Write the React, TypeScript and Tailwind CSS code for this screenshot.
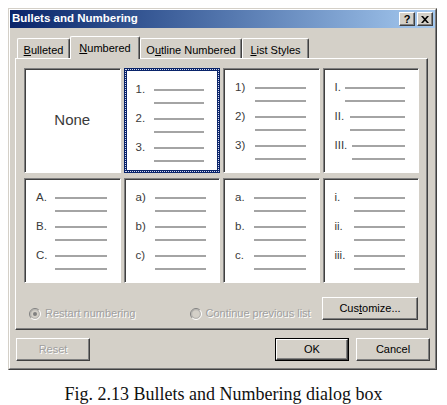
import React from 'react'

type Item = { label: string; numW: string }

const ui = "font-['Liberation_Sans',Arial,sans-serif]"

function Bar() {
  return <div className="h-[2px] flex-1 bg-[#a4a4a4]" />
}

function ListCell({ items, selected }: { items: Item[]; selected?: boolean }) {
  const content = (
    <div className={`flex flex-col gap-[3px] pt-[12px] pr-[13px] ${selected ? 'pl-[9px]' : 'pl-[11px]'}`}>
      {items.map((it) => (
        <div key={it.label}>
          <div className="flex h-[13px] items-center">
            <span className={`${it.numW} shrink-0 text-[11.5px] leading-none text-[#3a3a3a]`}>{it.label}</span>
            <Bar />
          </div>
          <div className="flex h-[13px] items-center">
            <span className={`${it.numW} shrink-0`} />
            <Bar />
          </div>
        </div>
      ))}
    </div>
  )

  if (selected) {
    return (
      <div className="h-[105px] border border-[#0a246a] bg-[#0a246a]">
        <div className="h-full border border-dotted border-[#d8dcf0]">
          <div className="h-full border border-[#0a246a] bg-white">{content}</div>
        </div>
      </div>
    )
  }

  return (
    <div className="h-[105px] border border-t-[#808080] border-l-[#808080] border-r-white border-b-white bg-white shadow-[inset_1px_1px_0_#404040]">
      {content}
    </div>
  )
}

function Radio({ checked }: { checked?: boolean }) {
  return (
    <svg width="12" height="12" viewBox="0 0 12 12" className="shrink-0">
      <defs>
        <linearGradient id="rg" x1="0" y1="0" x2="1" y2="1">
          <stop offset="0.45" stopColor="#808080" />
          <stop offset="0.55" stopColor="#ffffff" />
        </linearGradient>
      </defs>
      <circle cx="6" cy="6" r="5.5" fill="#d4d0c8" stroke="url(#rg)" />
      <circle cx="6" cy="6" r="4.3" fill="#d4d0c8" stroke="#9a9a9a" strokeWidth="0.6" />
      {checked && <circle cx="6" cy="6" r="2" fill="#808080" />}
    </svg>
  )
}

function Button({
  children,
  disabled,
  isDefault,
  width,
}: {
  children: React.ReactNode
  disabled?: boolean
  isDefault?: boolean
  width: string
}) {
  const face = (
    <div
      className={`flex h-full items-center justify-center border border-t-white border-l-white border-r-[#404040] border-b-[#404040] shadow-[inset_-1px_-1px_0_#808080] text-[11px] ${
        disabled ? 'text-[#a0a0a0] [text-shadow:1px_1px_0_#fff]' : 'text-black'
      }`}
    >
      {children}
    </div>
  )
  return (
    <div className={`${width} h-[23px] ${isDefault ? 'border border-black' : ''}`}>{face}</div>
  )
}

function Tab({ children, width, selected }: { children: React.ReactNode; width: string; selected?: boolean }) {
  if (selected) {
    return (
      <div
        className={`${width} relative -mb-px flex h-[23px] items-start justify-center rounded-t-[2px] border-l border-t border-r border-l-white border-t-white border-r-[#404040] bg-[#d4d0c8] pt-[3px] text-[11px] shadow-[inset_-1px_0_0_#808080]`}
      >
        {children}
      </div>
    )
  }
  return (
    <div
      className={`${width} flex h-[20px] items-start justify-center rounded-t-[2px] border-l border-t border-r border-l-white border-t-white border-r-[#404040] pt-[3px] text-[11px] shadow-[inset_-1px_0_0_#808080]`}
    >
      {children}
    </div>
  )
}

const grid: { items?: Item[]; none?: boolean; selected?: boolean }[] = [
  { none: true },
  {
    selected: true,
    items: [
      { label: '1.', numW: 'w-[18px]' },
      { label: '2.', numW: 'w-[18px]' },
      { label: '3.', numW: 'w-[18px]' },
    ],
  },
  {
    items: [
      { label: '1)', numW: 'w-[20px]' },
      { label: '2)', numW: 'w-[20px]' },
      { label: '3)', numW: 'w-[20px]' },
    ],
  },
  {
    items: [
      { label: 'I.', numW: 'w-[10px]' },
      { label: 'II.', numW: 'w-[15px]' },
      { label: 'III.', numW: 'w-[17px]' },
    ],
  },
  {
    items: [
      { label: 'A.', numW: 'w-[19px]' },
      { label: 'B.', numW: 'w-[19px]' },
      { label: 'C.', numW: 'w-[19px]' },
    ],
  },
  {
    items: [
      { label: 'a)', numW: 'w-[19px]' },
      { label: 'b)', numW: 'w-[19px]' },
      { label: 'c)', numW: 'w-[19px]' },
    ],
  },
  {
    items: [
      { label: 'a.', numW: 'w-[19px]' },
      { label: 'b.', numW: 'w-[19px]' },
      { label: 'c.', numW: 'w-[19px]' },
    ],
  },
  {
    items: [
      { label: 'i.', numW: 'w-[19px]' },
      { label: 'ii.', numW: 'w-[19px]' },
      { label: 'iii.', numW: 'w-[19px]' },
    ],
  },
]

export default function App() {
  return (
    <div className={`h-[405px] w-[447px] overflow-hidden bg-white pl-[8px] pt-[8px] ${ui}`}>
      {/* dialog window */}
      <div className="h-[362px] w-[429px] border border-t-[#d4d0c8] border-l-[#d4d0c8] border-r-[#404040] border-b-[#404040] bg-[#d4d0c8]">
        <div className="h-full border border-t-white border-l-white border-r-[#808080] border-b-[#808080]">
          {/* title bar */}
          <div className="flex h-[18px] items-center justify-between bg-gradient-to-r from-[#0a246a] to-[#a6caf0] pl-[2px] pr-[2px]">
            <span className="text-[11.5px] font-bold text-white">Bullets and Numbering</span>
            <div className="flex gap-[2px]">
              <div className="flex h-[14px] w-[16px] items-center justify-center border border-t-white border-l-white border-r-[#404040] border-b-[#404040] bg-[#d4d0c8] text-[11px] font-bold leading-none text-black shadow-[inset_-1px_-1px_0_#808080]">
                ?
              </div>
              <div className="flex h-[14px] w-[16px] items-center justify-center border border-t-white border-l-white border-r-[#404040] border-b-[#404040] bg-[#d4d0c8] shadow-[inset_-1px_-1px_0_#808080]">
                <svg width="8" height="7" viewBox="0 0 8 7">
                  <path d="M0 0h2l2 2.2L6 0h2L5 3.5 8 7H6L4 4.8 2 7H0l3-3.5z" fill="#000" />
                </svg>
              </div>
            </div>
          </div>

          {/* tabs */}
          <div className="mt-[8px] flex items-end pl-[7px]">
            <Tab width="w-[53px]">
              <span>
                <u>B</u>ulleted
              </span>
            </Tab>
            <Tab width="w-[70px]" selected>
              <span>
                <u>N</u>umbered
              </span>
            </Tab>
            <Tab width="w-[102px]">
              <span>
                O<u>u</u>tline Numbered
              </span>
            </Tab>
            <Tab width="w-[67px]">
              <span>
                <u>L</u>ist Styles
              </span>
            </Tab>
          </div>

          {/* tab panel */}
          <div className="ml-[5px] h-[272px] w-[413px] border border-t-white border-l-white border-r-[#404040] border-b-[#404040] shadow-[inset_-1px_-1px_0_#808080]">
            <div className="ml-[8px] mt-[9px] grid w-[395px] grid-cols-4 gap-x-[3px] gap-y-[5px]">
              {grid.map((c, i) =>
                c.none ? (
                  <div
                    key={i}
                    className="flex h-[105px] items-center justify-center border border-t-[#808080] border-l-[#808080] border-r-white border-b-white bg-white text-[15px] text-[#3a3a3a] shadow-[inset_1px_1px_0_#404040]"
                  >
                    None
                  </div>
                ) : (
                  <ListCell key={i} items={c.items!} selected={c.selected} />
                ),
              )}
            </div>

            <div className="mt-[14px] flex h-[23px] items-center pl-[13px]">
              <div className="mt-[10px] flex items-center gap-[4px] text-[11px] text-[#a0a0a0] [text-shadow:1px_1px_0_#fff]">
                <Radio checked />
                <span>Restart numbering</span>
              </div>
              <div className="ml-[54px] mt-[10px] flex items-center gap-[4px] text-[11px] text-[#a0a0a0] [text-shadow:1px_1px_0_#fff]">
                <Radio />
                <span>Continue previous list</span>
              </div>
              <div className="ml-auto mr-[9px]">
                <Button width="w-[96px]">
                  <span>
                    Cus<u>t</u>omize...
                  </span>
                </Button>
              </div>
            </div>
          </div>

          {/* bottom buttons */}
          <div className="mt-[8px] flex items-center pl-[6px] pr-[5px]">
            <Button width="w-[74px]" disabled>
              Reset
            </Button>
            <div className="ml-auto flex gap-[7px]">
              <Button width="w-[74px]" isDefault>
                OK
              </Button>
              <Button width="w-[74px]">Cancel</Button>
            </div>
          </div>
        </div>
      </div>

      {/* caption */}
      <div className="mt-[15px] w-[431px] text-center font-['Liberation_Serif','Times_New_Roman',serif] text-[18px] leading-none text-[#111]">
        Fig. 2.13 Bullets and Numbering dialog box
      </div>
    </div>
  )
}
